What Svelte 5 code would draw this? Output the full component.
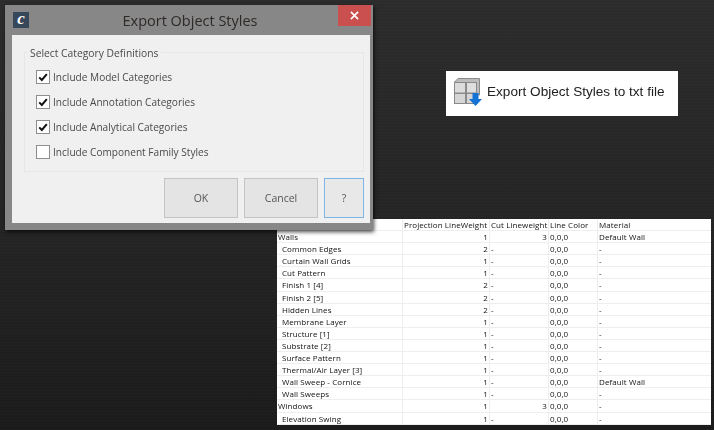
<script>
  const rows = [
    ['Walls', '1', '3', '0,0,0', 'Default Wall', true],
    ['Common Edges', '2', '-', '0,0,0', '-'],
    ['Curtain Wall Grids', '1', '-', '0,0,0', '-'],
    ['Cut Pattern', '1', '-', '0,0,0', '-'],
    ['Finish 1 [4]', '2', '-', '0,0,0', '-'],
    ['Finish 2 [5]', '2', '-', '0,0,0', '-'],
    ['Hidden Lines', '2', '-', '0,0,0', '-'],
    ['Membrane Layer', '1', '-', '0,0,0', '-'],
    ['Structure [1]', '1', '-', '0,0,0', '-'],
    ['Substrate [2]', '1', '-', '0,0,0', '-'],
    ['Surface Pattern', '1', '-', '0,0,0', '-'],
    ['Thermal/Air Layer [3]', '1', '-', '0,0,0', '-'],
    ['Wall Sweep - Cornice', '1', '-', '0,0,0', 'Default Wall'],
    ['Wall Sweeps', '1', '-', '0,0,0', '-'],
    ['Windows', '1', '3', '0,0,0', '-', true],
    ['Elevation Swing', '1', '-', '0,0,0', '-']
  ];
  const checks = [
    ['Include Model Categories', true],
    ['Include Annotation Categories', true],
    ['Include Analytical Categories', true],
    ['Include Component Family Styles', false]
  ];
</script>

<div class="slide">
  <section class="dialog">
    <header class="titlebar">
      <span class="logo">c</span>
      <h1>Export Object Styles</h1>
      <span class="close">
        <svg viewBox="0 0 10 10" width="9" height="9"><path d="M1 1 9 9M9 1 1 9" stroke="#fff" stroke-width="1.8" fill="none"/></svg>
      </span>
    </header>
    <div class="body">
      <fieldset>
        <legend>Select Category Definitions</legend>
        {#each checks as [label, on]}
          <div class="check">
            <span class="box">
              {#if on}
                <svg viewBox="0 0 12 12" width="10" height="10"><path d="M1.5 6.500 4.600 9.600 10.600 2.600" stroke="#111" stroke-width="2.400" fill="none"/></svg>
              {/if}
            </span>
            <span>{label}</span>
          </div>
        {/each}
      </fieldset>
      <div class="actions">
        <button class="ok">OK</button>
        <button class="cancel">Cancel</button>
        <button class="help">?</button>
      </div>
    </div>
  </section>

  <div class="command">
    <svg viewBox="0 0 30 30" width="30" height="30">
      <g stroke="#8a8a8a" stroke-width="1">
        <path d="M1.500 5 5 1.500H26.500V18H24V26.500H1.500Z" fill="#bdbdbd"/>
        <rect x="1.500" y="5.500" width="11" height="10.500" fill="#dcdcdc"/>
        <rect x="13.500" y="5.500" width="10" height="10.500" fill="#dedede"/>
        <rect x="1.500" y="16.500" width="11" height="10" fill="#d6d6d6"/>
        <rect x="13.500" y="16.500" width="10" height="10" fill="#d6d6d6"/>
      </g>
      <path d="M19.500 16h6v6h3.500l-6.500 7-6.500-7h3.500z" fill="#1673d6"/>
    </svg>
    <span>Export Object Styles to txt file</span>
  </div>

  <div class="sheet">
    <div class="row head">
      <span></span><span>Projection LineWeight</span><span>Cut Lineweight</span><span>Line Color</span><span>Material</span>
    </div>
    {#each rows as [name, proj, cut, color, mat, top]}
      <div class="row">
        <span class:indent={!top}>{name}</span>
        <span class="num">{proj}</span>
        <span class:num={cut !== '-'}>{cut}</span>
        <span>{color}</span>
        <span>{mat}</span>
      </div>
    {/each}
  </div>
</div>

<style>
  :global(body) { margin: 0; background: #222; }
  .slide {
    position: relative;
    width: 714px;
    height: 430px;
    overflow: hidden;
    background:
      repeating-linear-gradient(0deg, rgba(255,255,255,0.012) 0 1px, transparent 1px 3px),
      linear-gradient(180deg, #2c2c2c 0%, #242424 55%, #1b1b1b 100%);
    font-family: "Open Sans", "Noto Sans", sans-serif;
  }
  .dialog {
    position: absolute;
    left: 5px;
    top: 5px;
    width: 368px;
    height: 225px;
    box-sizing: border-box;
    background: #878787;
    padding: 0 3px 7px 7px;
    display: flex;
    flex-direction: column;
    box-shadow: 1px 2px 4px rgba(0,0,0,0.7);
    z-index: 2;
  }
  .titlebar {
    height: 30px;
    flex: none;
    display: flex;
    align-items: center;
    position: relative;
  }
  .logo {
    width: 16px;
    height: 16px;
    margin: -1px 0 0 1px;
    background: #37475a;
    color: #fff;
    font: italic 700 17px/13px "Liberation Serif", serif;
    text-align: center;
    flex: none;
  }
  h1 {
    position: absolute;
    left: 0;
    right: 2px;
    top: 5px;
    margin: 0;
    text-align: center;
    font-size: 14.500px;
    line-height: 22px;
    font-weight: 400;
    color: #2e2a28;
    filter: blur(0.4px);
  }
  .close {
    position: absolute;
    right: -1px;
    top: 0;
    width: 33px;
    height: 21px;
    background: #c9504f;
    display: flex;
    align-items: center;
    justify-content: center;
  }
  .body {
    flex: 1;
    background: #f0f0f0;
    padding: 17px 6px 0 12px;
    filter: blur(0.4px);
    color: #4a4a4a;
  }
  fieldset {
    margin: 0;
    padding: 3px 0 0 11px;
    height: 120px;
    box-sizing: border-box;
    border: 1px solid #e6e6e6;
    position: relative;
  }
  legend {
    position: absolute;
    left: 3px;
    top: -7px;
    padding: 0 2px;
    background: #f0f0f0;
    font-size: 10.300px;
    line-height: 14px;
  }
  .check {
    height: 25px;
    display: flex;
    align-items: center;
    gap: 3px;
    font-size: 10.100px;
    position: relative;
    top: 8px;
  }
  .box {
    width: 12px;
    height: 12px;
    border: 1px solid #8e8e8e;
    background: #fff;
    display: flex;
    align-items: center;
    justify-content: center;
    flex: none;
  }
  .actions {
    display: flex;
    justify-content: flex-end;
    gap: 6px;
    margin-top: 6px;
  }
  button {
    height: 40px;
    padding: 0;
    border: 1px solid #c4c4c4;
    background: #e4e4e4;
    font: inherit;
    font-size: 10.500px;
    color: #555;
  }
  .ok, .cancel { width: 74px; }
  .help { width: 40px; border-color: #7db4ea; background: #e8e8e8; }
  .command {
    position: absolute;
    left: 446px;
    top: 71px;
    width: 232px;
    height: 45px;
    box-sizing: border-box;
    background: #fff;
    display: flex;
    align-items: center;
    gap: 4px;
    padding: 0 0 4px 7px;
    color: #222;
    font-family: "Liberation Sans", sans-serif;
    font-size: 13.600px;
    filter: blur(0.35px);
  }
  .sheet {
    position: absolute;
    left: 277px;
    top: 219px;
    width: 434px;
    height: 206px;
    background: #fff;
    filter: blur(0.35px);
    font-size: 8px;
    font-weight: 500;
    color: #111;
  }
  .row {
    display: grid;
    grid-template-columns: 126px 87px 59px 49px 113px;
    height: 12.100px;
    line-height: 12px;
    box-sizing: border-box;
    border-bottom: 1px solid #eee;
    white-space: nowrap;
    letter-spacing: 0.08px;
  }
  .row span { padding: 0 1px; border-right: 1px solid #eee; overflow: hidden; }
  .row span:last-child { border-right: 0; }
  .indent { padding-left: 5px !important; }
  .num { text-align: right; }
</style>
